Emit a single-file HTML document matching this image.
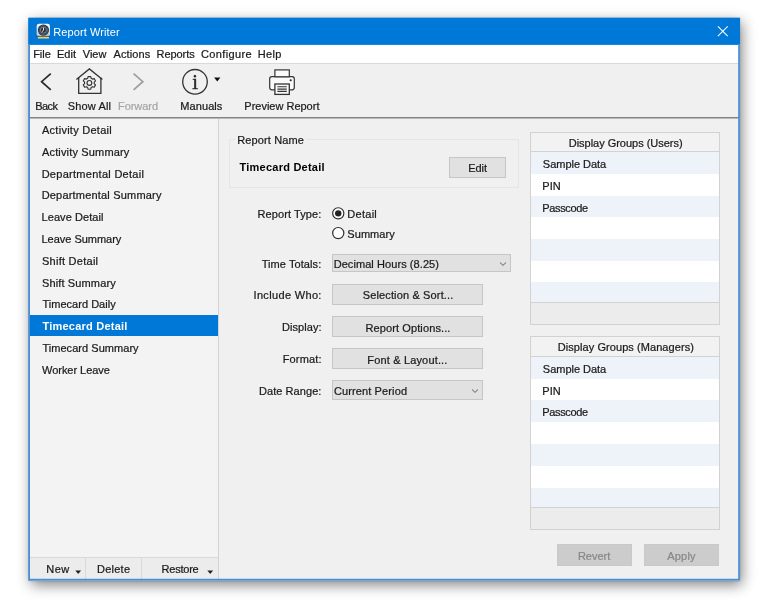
<!DOCTYPE html>
<html lang="en"><head><meta charset="utf-8"><title>Report Writer</title>
<style>
html,body{margin:0;padding:0;background:#fff;}
body{width:768px;height:603px;overflow:hidden;position:relative;font-family:"Liberation Sans",sans-serif;font-size:11px;color:#1a1a1a;}
#app div,#app svg.ic,#app span.t{position:absolute;}
#app span.t{white-space:pre;line-height:1;-webkit-text-stroke:0.22px;}
#app{will-change:transform;}
</style></head>
<body><div id="app">
<div class="win" style="left:29px;top:18px;width:711px;height:563px;background:#f0f0f0;box-shadow:2px 4px 13px rgba(0,0,0,.48),0 0 2px rgba(0,0,0,.2);"></div>
<svg class="ic" style="left:0;top:0" width="768" height="60" viewBox="0 0 768 60"><rect x="28.2" y="17.7" width="711.8" height="27.2" fill="#0078d7"/></svg>
<svg class="ic" style="left:36px;top:23px" width="16" height="17" viewBox="0 0 16 17">
<defs><linearGradient id="ig" x1="0" y1="0" x2="0" y2="1"><stop offset="0" stop-color="#fbfbfb"/><stop offset="1" stop-color="#bfc3c8"/></linearGradient></defs>
<rect x="0.7" y="0.8" width="13.3" height="12.9" rx="2.4" fill="url(#ig)"/>
<rect x="1.8" y="13.8" width="11.2" height="1.8" rx="0.5" fill="#efd75e"/>
<path d="M0.3 13.35H14.3" stroke="#3a3a3a" stroke-width="0.75"/>
<circle cx="7.4" cy="7.1" r="5.55" fill="#1d1d20"/>
<circle cx="7.4" cy="7.1" r="4.4" fill="none" stroke="#2d86e2" stroke-width="0.85"/>
<circle cx="7.4" cy="7.1" r="3.1" fill="#3a2f2a" stroke="#c9c9c9" stroke-width="0.55"/>
<path d="M7.5 4.6V7.3L5.9 8.7" stroke="#f4f4f4" stroke-width="0.9" fill="none"/>
<path d="M7.4 12.4V15.4" stroke="#b58a3a" stroke-width="0.6"/>
</svg>
<span class="t" style="left:53.24px;top:27px;color:#fff;letter-spacing:0.093px;-webkit-text-stroke:0;">Report Writer</span>
<svg class="ic" style="left:717px;top:25px" width="12" height="12" viewBox="0 0 12 12"><path d="M0.9 1.3L10.7 11.1M10.7 1.3L0.9 11.1" stroke="#fff" stroke-width="1.05" fill="none"/></svg>
<div class="menubar" style="left:30px;top:45px;width:709px;height:18px;background:#fff;"></div>
<span class="t" style="left:33.14px;top:49px;letter-spacing:0.027px;">File</span>
<span class="t" style="left:56.94px;top:49px;letter-spacing:0.056px;">Edit</span>
<span class="t" style="left:82.80px;top:49px;letter-spacing:-0.026px;">View</span>
<span class="t" style="left:113.50px;top:49px;letter-spacing:0.095px;">Actions</span>
<span class="t" style="left:156.54px;top:49px;letter-spacing:-0.052px;">Reports</span>
<span class="t" style="left:201.08px;top:49px;letter-spacing:0.346px;">Configure</span>
<span class="t" style="left:257.74px;top:49px;letter-spacing:0.327px;">Help</span>
<div class="toolbar" style="left:30px;top:63px;width:709px;height:54px;background:#f0f0f0;border-top:1px solid #d9d9d9;box-sizing:border-box;"></div>
<div style="left:30px;top:117px;width:709px;height:1px;background:#858585;"></div>
<div style="left:30px;top:118px;width:709px;height:1px;background:#b8b8b8;"></div>
<svg class="ic" style="left:38px;top:70px" width="16" height="24" viewBox="0 0 16 24"><path d="M12.8 3.6L3.6 11.7L12.8 19.8" stroke="#2b2b2b" stroke-width="1.7" fill="none" stroke-linejoin="miter"/></svg>
<span class="t" style="left:35.14px;top:101px;letter-spacing:-0.489px;">Back</span>
<svg class="ic" style="left:74px;top:66px" width="31" height="30" viewBox="0 0 31 30">
<path d="M2.4 13.4L15.4 2.9L28.4 13.4" stroke="#333" stroke-width="1.3" fill="none"/>
<path d="M4.7 11.6V27.3H26.9V11.6" stroke="#333" stroke-width="1.3" fill="none"/>
<g transform="translate(15.4 16.9)" stroke="#333" stroke-width="1.15" fill="none">
<circle r="2.4"/>
<path id="gear" d="M-1.35 -6.3 L1.35 -6.3 L1.75 -4.55 L3.05 -3.8 L4.78 -4.32 L6.13 -1.98 L4.82 -0.75 L4.82 0.75 L6.13 1.98 L4.78 4.32 L3.05 3.8 L1.75 4.55 L1.35 6.3 L-1.35 6.3 L-1.75 4.55 L-3.05 3.8 L-4.78 4.32 L-6.13 1.98 L-4.82 0.75 L-4.82 -0.75 L-6.13 -1.98 L-4.78 -4.32 L-3.05 -3.8 L-1.75 -4.55 Z" stroke-linejoin="round"/>
</g></svg>
<span class="t" style="left:67.66px;top:101px;letter-spacing:0.153px;">Show All</span>
<svg class="ic" style="left:130px;top:70px" width="16" height="24" viewBox="0 0 16 24"><path d="M3.6 3.6L12.8 11.7L3.6 19.8" stroke="#9d9d9d" stroke-width="1.7" fill="none"/></svg>
<span class="t" style="left:118.04px;top:101px;color:#a6a6a6;letter-spacing:-0.061px;">Forward</span>
<svg class="ic" style="left:180px;top:67px" width="44" height="30" viewBox="0 0 44 30">
<circle cx="15" cy="14.8" r="12.3" stroke="#333" stroke-width="1.3" fill="none"/>
<text x="15" y="21.8" text-anchor="middle" font-family="'Liberation Serif',serif" font-size="20.5" fill="#2b2b2b" stroke="#2b2b2b" stroke-width="0.45">i</text>
<path d="M34.1 10.6H40.4L37.25 14.4Z" fill="#111"/>
</svg>
<span class="t" style="left:180.34px;top:101px;letter-spacing:0.071px;">Manuals</span>
<svg class="ic" style="left:267px;top:67px" width="30" height="30" viewBox="0 0 30 30">
<rect x="2.7" y="9.6" width="24.6" height="13.2" rx="2.2" fill="#fafafa" stroke="#333" stroke-width="1.2"/>
<rect x="7.9" y="2.9" width="14.4" height="6.9" fill="#fafafa" stroke="#333" stroke-width="1.2"/>
<rect x="7.9" y="17" width="14.4" height="10.4" fill="#fafafa" stroke="#333" stroke-width="1.3"/>
<path d="M10.4 19.8H19.8M10.4 22.1H19.8M10.4 24.4H19.8" stroke="#333" stroke-width="1.1"/>
<circle cx="23.7" cy="13.2" r="1.05" fill="#222"/>
</svg>
<span class="t" style="left:244.34px;top:101px;letter-spacing:-0.006px;">Preview Report</span>
<div class="side" style="left:30px;top:119px;width:188px;height:438px;background:#f3f3f3;"></div>
<div style="left:218px;top:119px;width:1px;height:461px;background:#d2d2d2;"></div>
<span class="t" style="left:42.00px;top:125px;letter-spacing:0.265px;">Activity Detail</span>
<span class="t" style="left:42.00px;top:147px;letter-spacing:0.156px;">Activity Summary</span>
<span class="t" style="left:41.64px;top:169px;letter-spacing:0.282px;">Departmental Detail</span>
<span class="t" style="left:41.64px;top:190px;letter-spacing:0.195px;">Departmental Summary</span>
<span class="t" style="left:41.54px;top:212px;letter-spacing:0.067px;">Leave Detail</span>
<span class="t" style="left:41.54px;top:234px;letter-spacing:-0.027px;">Leave Summary</span>
<span class="t" style="left:41.96px;top:256px;letter-spacing:0.262px;">Shift Detail</span>
<span class="t" style="left:41.96px;top:278px;letter-spacing:0.135px;">Shift Summary</span>
<span class="t" style="left:42.43px;top:299px;letter-spacing:0.026px;">Timecard Daily</span>
<div style="left:30px;top:315px;width:188px;height:21px;background:#0078d7;"></div>
<span class="t" style="left:42.40px;top:321px;font-weight:700;-webkit-text-stroke:0;color:#fff;letter-spacing:0.231px;">Timecard Detail</span>
<span class="t" style="left:42.43px;top:343px;letter-spacing:0.041px;">Timecard Summary</span>
<span class="t" style="left:42.10px;top:365px;letter-spacing:-0.048px;">Worker Leave</span>
<div class="sidebtns" style="left:30px;top:557px;width:188px;height:23px;background:#ececec;border-top:1px solid #d9d9d9;box-sizing:border-box;"></div>
<div style="left:85px;top:558px;width:1px;height:22px;background:#d9d9d9;"></div>
<div style="left:141px;top:558px;width:1px;height:22px;background:#d9d9d9;"></div>
<span class="t" style="left:46.34px;top:564px;letter-spacing:0.410px;">New</span>
<span class="t" style="left:96.94px;top:564px;letter-spacing:0.262px;">Delete</span>
<span class="t" style="left:161.54px;top:564px;letter-spacing:-0.218px;">Restore</span>
<svg class="ic" style="left:75px;top:570px" width="7" height="5" viewBox="0 0 7 5"><path d="M0.3 0.5H6.1L3.2 3.9Z" fill="#222"/></svg>
<svg class="ic" style="left:207px;top:570px" width="7" height="5" viewBox="0 0 7 5"><path d="M0.3 0.5H6.1L3.2 3.9Z" fill="#222"/></svg>
<div class="group" style="left:229px;top:139px;width:290px;height:49px;border:1px solid #e5e5e5;box-sizing:border-box;"></div>
<div style="left:235px;top:134px;width:71px;height:12px;background:#f0f0f0;"></div>
<span class="t" style="left:237.14px;top:135px;letter-spacing:0.139px;">Report Name</span>
<span class="t" style="left:239.50px;top:162px;font-weight:700;-webkit-text-stroke:0;color:#000;letter-spacing:0.238px;">Timecard Detail</span>
<div class="btn" style="left:449px;top:157px;width:57px;height:21px;background:#e1e1e1;border:1px solid #c6c6c6;box-sizing:border-box;"></div>
<span class="t" style="left:468.14px;top:163px;letter-spacing:0.022px;">Edit</span>
<span class="t" style="left:257.54px;top:209px;letter-spacing:0.080px;">Report Type:</span>
<span class="t" style="left:261.73px;top:259px;letter-spacing:0.071px;">Time Totals:</span>
<span class="t" style="left:253.54px;top:290px;letter-spacing:0.332px;">Include Who:</span>
<span class="t" style="left:282.04px;top:322px;letter-spacing:0.061px;">Display:</span>
<span class="t" style="left:282.64px;top:354px;letter-spacing:0.177px;">Format:</span>
<span class="t" style="left:259.04px;top:386px;letter-spacing:0.059px;">Date Range:</span>
<svg class="ic" style="left:331px;top:206px" width="15" height="15" viewBox="0 0 15 15"><circle cx="7.25" cy="7.35" r="5.6" fill="#fff" stroke="#2e2e2e" stroke-width="1.2"/><circle cx="7.25" cy="7.35" r="3.2" fill="#222"/></svg>
<svg class="ic" style="left:331px;top:226px" width="15" height="15" viewBox="0 0 15 15"><circle cx="7.25" cy="7.1" r="5.6" fill="#fff" stroke="#2e2e2e" stroke-width="1.2"/></svg>
<span class="t" style="left:347.34px;top:209px;letter-spacing:0.272px;">Detail</span>
<span class="t" style="left:347.36px;top:229px;letter-spacing:0.047px;">Summary</span>
<div class="dd" style="left:332px;top:254px;width:179px;height:18px;background:#e1e1e1;border:1px solid #c6c6c6;box-sizing:border-box;"></div>
<span class="t" style="left:333.64px;top:259px;letter-spacing:0.074px;">Decimal Hours (8.25)</span>
<svg class="ic" style="left:498px;top:259.7px" width="10" height="8" viewBox="0 0 10 8"><path d="M2 2.5L5 5.4L8 2.5" stroke="#505050" stroke-width="0.9" fill="none"/></svg>
<div class="btn" style="left:332px;top:284px;width:151px;height:21px;background:#e1e1e1;border:1px solid #c6c6c6;box-sizing:border-box;"></div>
<span class="t" style="left:362.66px;top:290px;letter-spacing:0.144px;">Selection &amp; Sort...</span>
<div class="btn" style="left:332px;top:316px;width:151px;height:21px;background:#e1e1e1;border:1px solid #c6c6c6;box-sizing:border-box;"></div>
<span class="t" style="left:365.44px;top:323px;letter-spacing:0.113px;">Report Options...</span>
<div class="btn" style="left:332px;top:348px;width:151px;height:21px;background:#e1e1e1;border:1px solid #c6c6c6;box-sizing:border-box;"></div>
<span class="t" style="left:367.34px;top:355px;letter-spacing:0.160px;">Font &amp; Layout...</span>
<div class="dd" style="left:332px;top:380px;width:151px;height:20px;background:#e1e1e1;border:1px solid #c6c6c6;box-sizing:border-box;"></div>
<span class="t" style="left:333.98px;top:386px;letter-spacing:0.115px;">Current Period</span>
<svg class="ic" style="left:470.2px;top:386.5px" width="10" height="8" viewBox="0 0 10 8"><path d="M2 2.5L5 5.4L8 2.5" stroke="#505050" stroke-width="0.9" fill="none"/></svg>
<div class="list" style="left:530px;top:132px;width:190px;height:193px;background:#ececec;border:1px solid #d2d2d2;box-sizing:border-box;"></div>
<div style="left:531px;top:133px;width:188px;height:18px;background:#f2f2f2;"></div>
<div style="left:531px;top:151px;width:188px;height:152px;background:#fff;border-top:1px solid #d2d2d2;border-bottom:1px solid #d2d2d2;box-sizing:border-box;overflow:hidden;"></div>
<div style="left:531px;top:152px;width:188px;height:22px;background:#eef3fa;"></div>
<div style="left:531px;top:196px;width:188px;height:21px;background:#eef3fa;"></div>
<div style="left:531px;top:239px;width:188px;height:22px;background:#eef3fa;"></div>
<div style="left:531px;top:282px;width:188px;height:20px;background:#eef3fa;"></div>
<span class="t" style="left:568.74px;top:138px;letter-spacing:-0.023px;">Display Groups (Users)</span>
<span class="t" style="left:542.86px;top:159px;letter-spacing:-0.031px;">Sample Data</span>
<span class="t" style="left:542.34px;top:181px;letter-spacing:0.010px;">PIN</span>
<span class="t" style="left:542.34px;top:203px;letter-spacing:-0.372px;">Passcode</span>
<div class="list" style="left:530px;top:336px;width:190px;height:194px;background:#ececec;border:1px solid #d2d2d2;box-sizing:border-box;"></div>
<div style="left:531px;top:337px;width:188px;height:19px;background:#f2f2f2;"></div>
<div style="left:531px;top:356px;width:188px;height:152px;background:#fff;border-top:1px solid #d2d2d2;border-bottom:1px solid #d2d2d2;box-sizing:border-box;overflow:hidden;"></div>
<div style="left:531px;top:357px;width:188px;height:22px;background:#eef3fa;"></div>
<div style="left:531px;top:400px;width:188px;height:22px;background:#eef3fa;"></div>
<div style="left:531px;top:444px;width:188px;height:22px;background:#eef3fa;"></div>
<div style="left:531px;top:488px;width:188px;height:19px;background:#eef3fa;"></div>
<span class="t" style="left:557.74px;top:342px;letter-spacing:0.068px;">Display Groups (Managers)</span>
<span class="t" style="left:542.86px;top:364px;letter-spacing:-0.031px;">Sample Data</span>
<span class="t" style="left:542.34px;top:386px;letter-spacing:0.010px;">PIN</span>
<span class="t" style="left:542.34px;top:407px;letter-spacing:-0.372px;">Passcode</span>
<div class="btn" style="left:557px;top:544px;width:75px;height:22px;background:#cccccc;border:1px solid #c9c9c9;box-sizing:border-box;"></div>
<span class="t" style="left:577.94px;top:551px;color:#878787;letter-spacing:-0.015px;">Revert</span>
<div class="btn" style="left:644px;top:544px;width:75px;height:22px;background:#cccccc;border:1px solid #c9c9c9;box-sizing:border-box;"></div>
<span class="t" style="left:667.20px;top:551px;color:#878787;letter-spacing:0.221px;">Apply</span>
<svg class="ic" style="left:0;top:0;pointer-events:none" width="768" height="603" viewBox="0 0 768 603"><path d="M29.1 44V579.75H739.05V44" fill="none" stroke="#4a8fd6" stroke-width="1.8"/></svg>
</div></body></html>
